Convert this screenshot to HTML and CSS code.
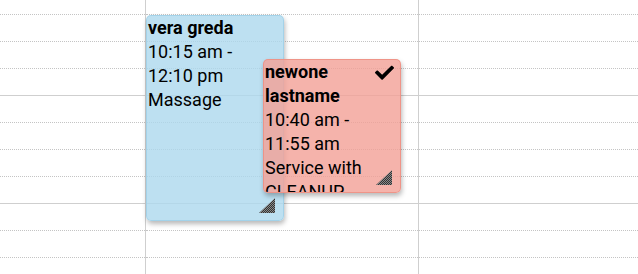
FILE: index.html
```html
<!DOCTYPE html>
<html lang="en">
<head>
  <meta charset="UTF-8">
  <title>Schedule</title>
  <link rel="stylesheet" href="styles.css">
</head>
<body>
  <div class="calendar">
    <div class="day-col first">
      <div class="slot"></div><div class="slot"></div><div class="slot"></div><div class="slot hour"></div>
      <div class="slot"></div><div class="slot"></div><div class="slot"></div><div class="slot hour"></div>
      <div class="slot"></div><div class="slot"></div><div class="slot"></div>
    </div>
    <div class="day-col middle">
      <div class="slot"></div><div class="slot"></div><div class="slot"></div><div class="slot hour"></div>
      <div class="slot"></div><div class="slot"></div><div class="slot"></div><div class="slot hour"></div>
      <div class="slot"></div><div class="slot"></div><div class="slot"></div>

      <div class="event blue" style="top: 26.5px; height: 206px;">
        <div class="event-title">vera greda</div>
        <div class="event-time">10:15 am - 12:10 pm</div>
        <div class="event-note">Massage</div>
        <span class="grip">
          <svg width="16" height="15" viewBox="0 0 16 15">
            <defs>
              <pattern id="chk1" width="2" height="2" patternUnits="userSpaceOnUse">
                <rect x="0" y="0" width="2" height="2" fill="#8a8a8a"></rect>
                <rect x="0" y="0" width="1" height="1" fill="#333"></rect>
                <rect x="1" y="1" width="1" height="1" fill="#333"></rect>
              </pattern>
            </defs>
            <polygon points="16,0 16,15 0,15" fill="url(#chk1)"></polygon>
          </svg>
        </span>
      </div>

      <div class="event pink" style="top: 71px; left: 117px; height: 134px;">
        <span class="done">
          <svg width="19" height="15" viewBox="0 0 512 400">
            <path d="M173.9 389.4l-166.4-166.4c-10-10-10-26.2 0-36.2l36.2-36.2c10-10 26.2-10 36.2 0L192 262.7 432.1 22.6c10-10 26.2-10 36.2 0l36.2 36.2c10 10 10 26.2 0 36.2l-294.4 294.4c-10 10-26.2 10-36.2 0z" fill="#000"></path>
          </svg>
        </span>
        <div class="event-title">newone lastname</div>
        <div class="event-time">10:40 am - 11:55 am</div>
        <div class="event-note">Service with CLEANUP</div>
        <span class="grip">
          <svg width="16" height="15" viewBox="0 0 16 15">
            <defs>
              <pattern id="chk2" width="2" height="2" patternUnits="userSpaceOnUse">
                <rect x="0" y="0" width="2" height="2" fill="#8a8a8a"></rect>
                <rect x="0" y="0" width="1" height="1" fill="#333"></rect>
                <rect x="1" y="1" width="1" height="1" fill="#333"></rect>
              </pattern>
            </defs>
            <polygon points="16,0 16,15 0,15" fill="url(#chk2)"></polygon>
          </svg>
        </span>
      </div>
    </div>
    <div class="day-col last">
      <div class="slot"></div><div class="slot"></div><div class="slot"></div><div class="slot hour"></div>
      <div class="slot"></div><div class="slot"></div><div class="slot"></div><div class="slot hour"></div>
      <div class="slot"></div><div class="slot"></div><div class="slot"></div>
    </div>
  </div>
</body>
</html>
```

FILE: styles.css
```css
    body {
      margin: 0;
      background: #fff;
      font-family: Roboto, "Liberation Sans", sans-serif;
      color: #000;
      overflow: hidden;
    }
    .calendar {
      display: flex;
      margin-top: -12px;
      height: 286px;
    }
    .day-col {
      position: relative;
      border-right: 1px solid #cfcfcf;
    }
    .day-col.first {
      width: 145px;
    }
    .day-col.middle {
      width: 272px;
    }
    .day-col.last {
      flex: 1;
      border-right: none;
    }
    .slot {
      height: 26px;
      border-bottom: 1px dotted #c4c4c4;
    }
    .slot.hour {
      border-bottom: 1px solid #cfcfcf;
    }
    .event {
      position: absolute;
      left: 0;
      width: 138px;
      border: 1px solid transparent;
      border-radius: 5px;
      padding: 0 5px 0 1px;
      box-sizing: border-box;
      overflow: hidden;
      font-size: 18px;
      line-height: 24px;
      box-shadow: 1px 3px 5px rgba(0,0,0,0.28);
      z-index: 1;
    }
    .event.blue {
      background: rgba(172, 216, 237, 0.8);
      border-color: rgba(160, 208, 232, 0.9);
    }
    .event.pink {
      background: rgba(243, 160, 150, 0.8);
      border-color: rgba(238, 140, 128, 0.8);
      z-index: 2;
    }
    .event-title {
      font-weight: 700;
      padding-right: 20px;
    }
    .done {
      position: absolute;
      top: 5px;
      right: 6px;
      line-height: 0;
    }
    .grip {
      position: absolute;
      right: 8px;
      bottom: 7px;
      line-height: 0;
    }
```
